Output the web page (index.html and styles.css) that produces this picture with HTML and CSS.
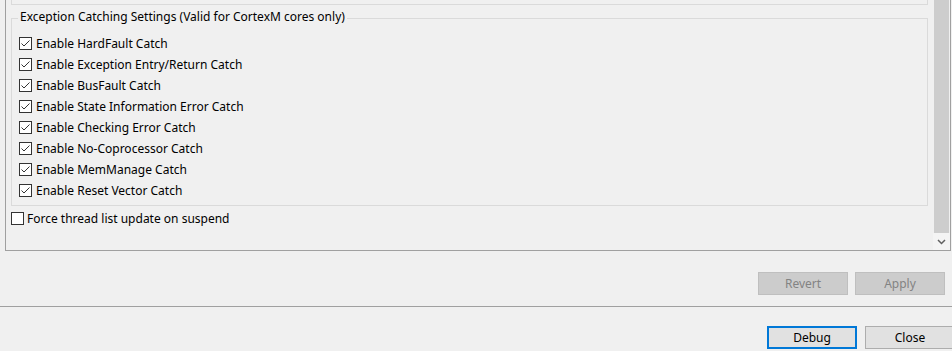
FILE: index.html
```html
<!DOCTYPE html>
<html lang="en">
<head>
    <meta charset="UTF-8">
    <title>Debug Configuration</title>
    <link rel="stylesheet" href="styles.css">
</head>
<body>
    <div class="scroll-pane">
        <div class="pane-content">
            <div class="prev-group"></div>

            <div class="group-box">
                <span class="group-title">Exception Catching Settings (Valid for CortexM cores only)</span>
                <label class="check-row"><span class="box checked"></span>Enable HardFault Catch</label>
                <label class="check-row"><span class="box checked"></span>Enable Exception Entry/Return Catch</label>
                <label class="check-row"><span class="box checked"></span>Enable BusFault Catch</label>
                <label class="check-row"><span class="box checked"></span>Enable State Information Error Catch</label>
                <label class="check-row"><span class="box checked"></span>Enable Checking Error Catch</label>
                <label class="check-row"><span class="box checked"></span>Enable No-Coprocessor Catch</label>
                <label class="check-row"><span class="box checked"></span>Enable MemManage Catch</label>
                <label class="check-row"><span class="box checked"></span>Enable Reset Vector Catch</label>
            </div>

            <label class="check-row force-row"><span class="box"></span>Force thread list update on suspend</label>
        </div>

        <div class="scrollbar">
            <div class="thumb"></div>
            <div class="arrow-down">
                <svg width="9" height="6" viewBox="0 0 9 6"><path d="M1 1 L4.5 4.5 L8 1" fill="none" stroke="#606060" stroke-width="1.5"/></svg>
            </div>
        </div>
    </div>

    <div class="page-buttons">
        <button class="btn disabled">Revert</button>
        <button class="btn disabled">Apply</button>
    </div>

    <div class="separator"></div>

    <div class="dialog-buttons">
        <button class="btn default">Debug</button>
        <button class="btn">Close</button>
    </div>
</body>
</html>
```

FILE: styles.css
```css
body {
  margin: 0;
  background-color: #f0f0f0;
  font-family: "Noto Sans", "Open Sans", sans-serif;
  font-size: 12px;
  color: #000;
  overflow: hidden;
}

.scroll-pane {
  display: flex;
  margin-left: 5px;
  width: 944px;
  height: 250px;
  border-left: 1px solid #a0a0a0;
  border-right: 1px solid #a0a0a0;
  border-bottom: 1px solid #a0a0a0;
}

.pane-content {
  flex: 1;
  padding: 0 5px;
}

.prev-group {
  height: 4px;
  border: 1px solid #dadada;
  border-top: none;
}

.group-box {
  position: relative;
  margin-top: 13px;
  padding: 14px 7px 4px;
  border: 1px solid #dadada;
}

.group-title {
  position: absolute;
  top: -10px;
  left: 6px;
  padding: 0 2px;
  line-height: 16px;
  background-color: #f0f0f0;
}

.check-row {
  display: flex;
  align-items: center;
  height: 21px;
  white-space: nowrap;
}

.box {
  width: 11px;
  height: 11px;
  margin-right: 4px;
  border: 1px solid #333;
  background-color: #fff;
  flex: none;
}

.box.checked {
  background: #fff url("data:image/svg+xml,%3Csvg xmlns='http://www.w3.org/2000/svg' width='11' height='11'%3E%3Cpath d='M1.5 5.5 L4 8 L9.5 2.5' fill='none' stroke='%23333' stroke-width='1'/%3E%3C/svg%3E") no-repeat;
}

.force-row {
  margin-top: 2px;
}

.force-row .box {
  margin-right: 3px;
}

.scrollbar {
  display: flex;
  flex-direction: column;
  width: 17px;
}

.thumb {
  height: 233px;
  margin: 0 1px;
  background-color: #cdcdcd;
}

.arrow-down {
  flex: 1;
  display: flex;
  align-items: center;
  justify-content: center;
  background-color: #f4f4f4;
}

.page-buttons {
  display: flex;
  justify-content: flex-end;
  gap: 7px;
  margin-top: 21px;
  padding-right: 7px;
}

.btn {
  width: 90px;
  height: 23px;
  padding: 0;
  font-family: inherit;
  font-size: 12px;
  color: #000;
  background-color: #e1e1e1;
  border: 1px solid #adadad;
}

.btn.disabled {
  color: #838383;
  background-color: #cccccc;
  border-color: #bfbfbf;
}

.btn.default {
  border: 2px solid #0078d7;
}

.separator {
  margin-top: 11px;
  height: 1px;
  background-color: #a0a0a0;
}

.dialog-buttons {
  display: flex;
  justify-content: flex-end;
  gap: 8px;
  margin-top: 19px;
  margin-right: -3px;
}
```
